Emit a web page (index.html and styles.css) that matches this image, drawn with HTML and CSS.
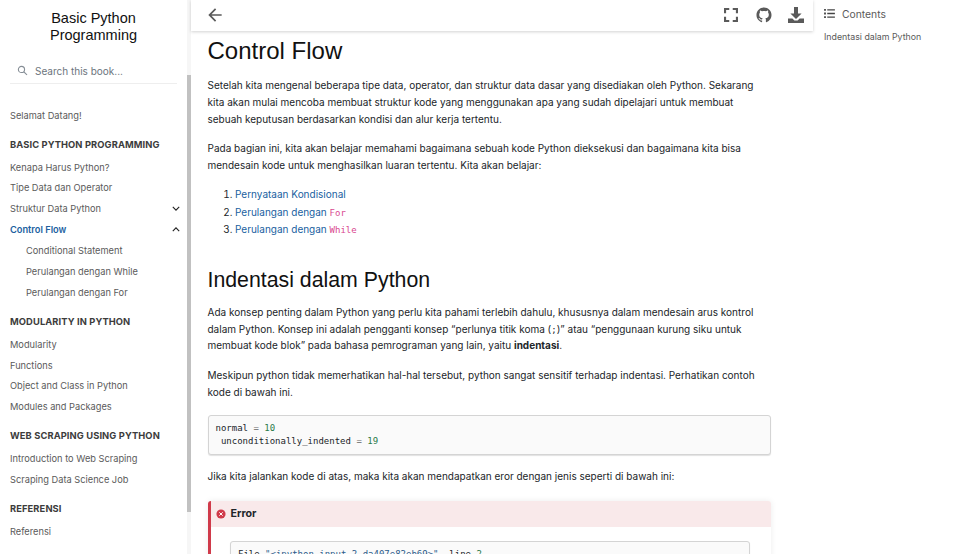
FILE: index.html
```html
<!DOCTYPE html>
<html lang="id">
<head>
  <meta charset="UTF-8">
  <title>Control Flow - Basic Python Programming</title>
  <link rel="stylesheet" href="styles.css">
</head>
<body>

  <aside class="sidebar">
    <div class="sidebar-isi">
      <div class="judul-buku">Basic Python Programming</div>
      <div class="pencarian">
        <svg class="ikon-cari" viewBox="0 0 16 16"><circle cx="6.5" cy="6.5" r="4.5"/><path d="M10 10l4.5 4.5"/></svg>
        <span>Search this book...</span>
      </div>
      <nav class="menu">
        <a class="item">Selamat Datang!</a>
        <div class="bagian">Basic Python Programming</div>
        <a class="item">Kenapa Harus Python?</a>
        <a class="item">Tipe Data dan Operator</a>
        <a class="item">Struktur Data Python
          <svg class="panah" viewBox="0 0 10 6"><path d="M1 1l4 4 4-4"/></svg>
        </a>
        <a class="item aktif">Control Flow
          <svg class="panah" viewBox="0 0 10 6"><path d="M1 5l4-4 4 4"/></svg>
        </a>
        <a class="item sub">Conditional Statement</a>
        <a class="item sub">Perulangan dengan While</a>
        <a class="item sub">Perulangan dengan For</a>
        <div class="bagian">Modularity in Python</div>
        <a class="item">Modularity</a>
        <a class="item">Functions</a>
        <a class="item">Object and Class in Python</a>
        <a class="item">Modules and Packages</a>
        <div class="bagian">Web Scraping using Python</div>
        <a class="item">Introduction to Web Scraping</a>
        <a class="item">Scraping Data Science Job</a>
        <div class="bagian">Referensi</div>
        <a class="item">Referensi</a>
      </nav>
    </div>
    <div class="scrollbar"><div class="scrollbar-thumb"></div></div>
  </aside>

  <div class="tengah">
    <header class="topbar">
      <svg class="ikon-kembali" viewBox="0 0 24 24"><path d="M20 11H7.83l5.59-5.59L12 4l-8 8 8 8 1.41-1.41L7.83 13H20v-2z"/></svg>
      <div class="topbar-kanan">
        <svg class="ikon" viewBox="2.860 2.860 18.300 18.300"><path d="M4 4h6v2.400H6.400V10H4zM14 4h6v6h-2.400V6.400H14zM4 14h2.400v3.600H10V20H4zM17.600 14H20v6h-6v-2.400h3.600z"/></svg>
        <svg class="ikon" viewBox="-0.500 -0.500 17 17"><path d="M8 0C3.58 0 0 3.58 0 8c0 3.54 2.29 6.53 5.47 7.59.4.07.55-.17.55-.38 0-.19-.01-.82-.01-1.49-2.01.37-2.53-.49-2.69-.94-.09-.23-.48-.94-.82-1.13-.28-.15-.68-.52-.01-.53.63-.01 1.08.58 1.23.82.72 1.21 1.87.87 2.33.66.07-.52.28-.87.51-1.07-1.78-.2-3.64-.89-3.64-3.95 0-.87.31-1.59.82-2.15-.08-.2-.36-1.02.08-2.12 0 0 .67-.21 2.2.82.64-.18 1.32-.27 2-.27.68 0 1.36.09 2 .27 1.53-1.04 2.2-.82 2.2-.82.44 1.1.16 1.92.08 2.12.51.56.82 1.27.82 2.15 0 3.07-1.87 3.75-3.65 3.95.29.25.54.73.54 1.48 0 1.07-.01 1.93-.01 2.2 0 .21.15.46.55.38A8.013 8.013 0 0016 8c0-4.42-3.58-8-8-8z"/></svg>
        <svg class="ikon" viewBox="2 2 20 20"><path d="M9.500 2h5v8H19l-7 7-7-7h4.500zM2 16.500h5.500l2.500 2.500h4l2.500-2.500H22V22H2z"/></svg>
      </div>
    </header>

    <main class="konten">
      <h1>Control Flow</h1>
      <p>Setelah kita mengenal beberapa tipe data, operator, dan struktur data dasar yang disediakan oleh Python. Sekarang kita akan mulai mencoba membuat struktur kode yang menggunakan apa yang sudah dipelajari untuk membuat sebuah keputusan berdasarkan kondisi dan alur kerja tertentu.</p>
      <p>Pada bagian ini, kita akan belajar memahami bagaimana sebuah kode Python dieksekusi dan bagaimana kita bisa mendesain kode untuk menghasilkan luaran tertentu. Kita akan belajar:</p>
      <ol>
        <li><a>Pernyataan Kondisional</a></li>
        <li><a>Perulangan dengan <code>For</code></a></li>
        <li><a>Perulangan dengan <code>While</code></a></li>
      </ol>
      <h2>Indentasi dalam Python</h2>
      <p>Ada konsep penting dalam Python yang perlu kita pahami terlebih dahulu, khususnya dalam mendesain arus kontrol dalam Python. Konsep ini adalah pengganti konsep “perlunya titik koma (<code class="hitam">;</code>)” atau “penggunaan kurung siku untuk membuat kode blok” pada bahasa pemrograman yang lain, yaitu <strong>indentasi</strong>.</p>
      <p>Meskipun python tidak memerhatikan hal-hal tersebut, python sangat sensitif terhadap indentasi. Perhatikan contoh kode di bawah ini.</p>
      <pre class="blok-kode">normal <span class="op">=</span> <span class="angka">10</span>
 unconditionally_indented <span class="op">=</span> <span class="angka">19</span></pre>
      <p>Jika kita jalankan kode di atas, maka kita akan mendapatkan eror dengan jenis seperti di bawah ini:</p>
      <section class="kotak-eror">
        <div class="kepala-eror">
          <svg class="ikon-eror" viewBox="0 0 12 12"><circle cx="6" cy="6" r="5.500"/><path d="M4 4l4 4M8 4l-4 4"/></svg>
          Error
        </div>
        <pre class="blok-kode dalam">File <span class="teks">"&lt;ipython-input-2-da407e82eb69&gt;"</span>, line <span class="angka">2</span></pre>
      </section>
    </main>
  </div>

  <aside class="daftar-isi">
    <div class="daftar-judul">
      <svg class="ikon-daftar" viewBox="0 0 12 10"><path d="M0 0h2v2H0zM3.500 .300H12v1.400H3.500zM0 4h2v2H0zM3.500 4.300H12v1.400H3.500zM0 8h2v2H0zM3.500 8.300H12v1.400H3.500z"/></svg>
      Contents
    </div>
    <a class="daftar-item">Indentasi dalam Python</a>
  </aside>

</body>
</html>
```

FILE: styles.css
```css
* {
  box-sizing: border-box;
}

html, body {
  height: 100%;
}

body {
  font-family: "Inter", "Liberation Sans", Arial, sans-serif;
  font-size: 10px;
  color: #212529;
  background: #fff;
  display: flex;
  height: 554px;
  margin: 0;
  overflow: hidden;
}

/* sidebar */
.sidebar {
  width: 191px;
  flex-shrink: 0;
  display: flex;
}

.sidebar-isi {
  width: 187px;
  padding: 10px 10px 0;
}

.judul-buku {
  font-family: "Liberation Sans", Arial, sans-serif;
  font-size: 14.500px;
  line-height: 17px;
  color: #111;
  text-align: center;
  padding: 0 25px;
}

.pencarian {
  display: flex;
  align-items: center;
  gap: 7px;
  height: 26px;
  margin-top: 14px;
  padding-left: 7px;
  font-size: 10px;
  color: #6c757d;
  border-bottom: 1px solid #eee;
}

.ikon-cari {
  width: 11px;
  height: 11px;
  fill: none;
  stroke: #868e96;
  stroke-width: 1.600;
}

.menu {
  margin-top: 20.600px;
}

.item {
  display: flex;
  align-items: center;
  justify-content: space-between;
  height: 20.830px;
  font-size: 9.250px;
  color: #5a5a5a;
}

.item.sub {
  padding-left: 16px;
}

.item.aktif {
  color: #205f9f;
  font-weight: 600;
}

.panah {
  width: 8px;
  height: 5px;
  margin-right: -3px;
  fill: none;
  stroke: #222;
  stroke-width: 1.400;
}

.bagian {
  margin-top: 9.300px;
  margin-bottom: 2px;
  height: 20px;
  line-height: 20px;
  font-size: 9.350px;
  font-weight: 700;
  letter-spacing: .1px;
  text-transform: uppercase;
  color: #3c3c3c;
}

.scrollbar {
  width: 4px;
  height: 100%;
  background: #f6f6f6;
  padding-top: 75px;
}

.scrollbar-thumb {
  height: 437px;
  background: #c1c1c1;
}

/* kolom tengah */
.tengah {
  width: 622px;
  flex-shrink: 0;
}

.topbar {
  display: flex;
  align-items: center;
  justify-content: space-between;
  height: 31px;
  padding: 0 9px 2px 14px;
  box-shadow: 0 1px 3px rgba(0, 0, 0, .18);
}

.topbar-kanan {
  display: flex;
  gap: 16.500px;
}

.ikon {
  width: 16px;
  height: 16px;
  fill: #5a5a5a;
}

.ikon-kembali {
  width: 20px;
  height: 20px;
  fill: #5a5a5a;
}

.konten {
  padding: 6px 42.500px 0 16.500px;
  line-height: 16.800px;
}

h1, h2 {
  font-family: "Liberation Sans", Arial, sans-serif;
  font-weight: 400;
  color: #111;
}

h1 {
  font-size: 24px;
  line-height: 28px;
  margin: 0 0 12px;
}

h2 {
  font-size: 21.300px;
  line-height: 26px;
  margin: 28px 0 11.200px;
}

p {
  margin: 0 0 12.600px;
}

ol {
  margin: 0;
  padding-left: 27.500px;
}

li {
  height: 17.500px;
  line-height: 17.500px;
}

a {
  color: #205f9f;
}

code, pre {
  font-family: "DejaVu Sans Mono", "Liberation Mono", monospace;
}

code {
  font-size: 9px;
  line-height: 1;
  color: #d9488f;
}

code.hitam {
  color: #212529;
}

.blok-kode {
  margin: 14.600px 0 13.500px;
  height: 39.500px;
  padding: 6px 7px;
  font-size: 9px;
  line-height: 12.500px;
  color: #212529;
  background: #fafafa;
  border: 1px solid #d4d4d4;
  border-radius: 3px;
  box-shadow: 0 1px 1px rgba(0, 0, 0, .12);
}

.op {
  color: #666;
}

.angka {
  color: #2a7a4b;
}

.teks {
  color: #2c5a8a;
}

.kotak-eror {
  margin-top: 16.500px;
  height: 80px;
  border-left: 3px solid #d03a4a;
  border-radius: 3px;
  box-shadow: 0 0 6px rgba(0, 0, 0, .08);
}

.kepala-eror {
  display: flex;
  align-items: center;
  gap: 5px;
  height: 26px;
  padding-left: 5px;
  font-size: 10.700px;
  font-weight: 700;
  background: #f9e9ea;
  border-radius: 0 3px 0 0;
}

.ikon-eror {
  width: 10px;
  height: 10px;
  fill: #d03a4a;
  stroke: #fff;
  stroke-width: 1.200;
}

.ikon-eror circle {
  stroke: none;
}

.blok-kode.dalam {
  margin: 13.500px 20.500px 0 19.500px;
}

/* daftar isi kanan */
.daftar-isi {
  width: 147px;
  flex-shrink: 0;
  padding: 6px 11px 0;
  font-size: 8.800px;
  color: #5a5a5a;
}

.daftar-judul {
  display: flex;
  align-items: center;
  gap: 7px;
  height: 15px;
  font-size: 10.300px;
  margin-bottom: 10px;
}

.ikon-daftar {
  width: 11px;
  height: 9px;
  fill: #444;
}

.daftar-item {
  color: #5a5a5a;
}
```
